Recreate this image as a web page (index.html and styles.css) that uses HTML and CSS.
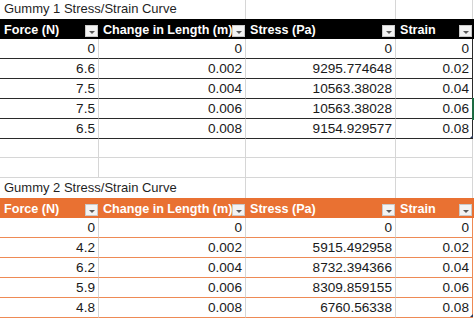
FILE: index.html
```html
<!DOCTYPE html>
<html>
<head>
<meta charset="utf-8">
<link rel="stylesheet" href="styles.css">
</head>
<body>
<div class="sheet">
  <div class="row h19 title-row">
    <div class="cell title span2">Gummy 1 Stress/Strain Curve</div>
    <div class="cell plain"></div>
    <div class="cell plain"></div>
  </div>
  <div class="row head black">
    <div class="cell th"><span>Force (N)</span><i class="btn"></i></div>
    <div class="cell th"><span>Change in Length (m)</span><i class="btn"></i></div>
    <div class="cell th"><span>Stress (Pa)</span><i class="btn"></i></div>
    <div class="cell th"><span>Strain</span><i class="btn"></i></div>
  </div>
  <div class="row data t1"><div class="cell">0</div><div class="cell">0</div><div class="cell">0</div><div class="cell last">0</div></div>
  <div class="row data t1"><div class="cell">6.6</div><div class="cell">0.002</div><div class="cell">9295.774648</div><div class="cell last">0.02</div></div>
  <div class="row data t1"><div class="cell">7.5</div><div class="cell">0.004</div><div class="cell">10563.38028</div><div class="cell last">0.04</div></div>
  <div class="row data t1"><div class="cell">7.5</div><div class="cell">0.006</div><div class="cell">10563.38028</div><div class="cell last">0.06</div></div>
  <div class="row data t1"><div class="cell">6.5</div><div class="cell">0.008</div><div class="cell">9154.929577</div><div class="cell last">0.08</div></div>
  <div class="row h19 empty"><div class="cell"></div><div class="cell"></div><div class="cell"></div><div class="cell"></div></div>
  <div class="row empty"><div class="cell"></div><div class="cell"></div><div class="cell"></div><div class="cell"></div></div>
  <div class="row title-row">
    <div class="cell title span2">Gummy 2 Stress/Strain Curve</div>
    <div class="cell plain"></div>
    <div class="cell plain"></div>
  </div>
  <div class="row head orange">
    <div class="cell th"><span>Force (N)</span><i class="btn"></i></div>
    <div class="cell th"><span>Change in Length (m)</span><i class="btn"></i></div>
    <div class="cell th"><span>Stress (Pa)</span><i class="btn"></i></div>
    <div class="cell th"><span>Strain</span><i class="btn"></i></div>
  </div>
  <div class="row data t2"><div class="cell">0</div><div class="cell">0</div><div class="cell">0</div><div class="cell last">0</div></div>
  <div class="row data t2"><div class="cell">4.2</div><div class="cell">0.002</div><div class="cell">5915.492958</div><div class="cell last">0.02</div></div>
  <div class="row data t2"><div class="cell">6.2</div><div class="cell">0.004</div><div class="cell">8732.394366</div><div class="cell last">0.04</div></div>
  <div class="row data t2"><div class="cell">5.9</div><div class="cell">0.006</div><div class="cell">8309.859155</div><div class="cell last">0.06</div></div>
  <div class="row data t2"><div class="cell">4.8</div><div class="cell">0.008</div><div class="cell">6760.56338</div><div class="cell last">0.08</div></div>
</div>
<div class="selection"></div>
<div class="handle h1"></div>
<div class="handle h2"></div>
</body>
</html>
```
FILE: styles.css
```css
html, body {
  margin: 0;
  padding: 0;
}
body {
  width: 474px;
  height: 319px;
  overflow: hidden;
  background: #ffffff;
  position: relative;
  font-family: "Liberation Sans", Arial, sans-serif;
  color: #1a1a1a;
}
.sheet {
  display: flex;
  flex-direction: column;
}
.row {
  display: grid;
  grid-template-columns: 99px 147px 150px 77px;
  height: 20px;
}
.row.h19 {
  height: 19px;
}
.cell {
  box-sizing: border-box;
  border-right: 1px solid #d6d6d6;
  border-bottom: 1px solid #d6d6d6;
  display: flex;
  align-items: flex-end;
  justify-content: flex-end;
  padding: 0 3px 1px 0;
  font-size: 13.6px;
  line-height: 16px;
  white-space: nowrap;
}
.title-row .cell {
  border-bottom: none;
}
.cell.title {
  grid-column: span 2;
  justify-content: flex-start;
  padding: 0 0 2px 4px;
  font-size: 13px;
  color: #1f1f1f;
}
.head .cell {
  border: none;
  justify-content: space-between;
  align-items: flex-end;
  padding: 0 1px 2px 4px;
  font-size: 12.6px;
  font-weight: bold;
  color: #ffffff;
}
.head .cell span {
  margin-bottom: -1px;
}
.head.black {
  background: #000000;
}
.head.orange {
  background: #e97132;
}
.btn {
  display: flex;
  align-items: center;
  justify-content: center;
  box-sizing: border-box;
  width: 13px;
  height: 12px;
  background: #f3f3f3;
  border: 1px solid #c9c9c9;
}
.btn::after {
  content: "";
  display: block;
  margin-top: 2px;
  width: 0;
  height: 0;
  border-left: 3px solid transparent;
  border-right: 3px solid transparent;
  border-top: 3px solid #5a5a5a;
}
.t1 .cell {
  border-bottom: 1px solid #2a2a2a;
}
.t1 .cell.last {
  border-right: 1px solid #2a2a2a;
}
.t2 .cell {
  border-bottom: 1px solid #ee8a55;
}
.t2 .cell.last {
  border-right: 1px solid #ee8a55;
}
.selection {
  position: absolute;
  left: 472px;
  top: 98px;
  width: 2px;
  height: 22px;
  background: #1d6b43;
}
.handle {
  position: absolute;
  width: 0;
  height: 0;
  border-left: 3px solid transparent;
  border-bottom: 3px solid #2d3a5a;
}
.handle.h1 {
  left: 470px;
  top: 135px;
}
.handle.h2 {
  left: 470px;
  top: 314px;
}
```
